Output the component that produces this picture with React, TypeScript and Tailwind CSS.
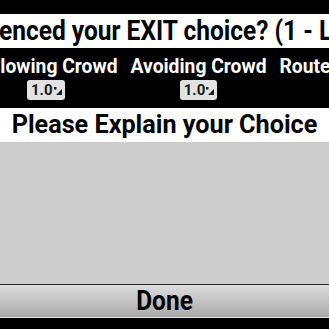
import React from 'react';

const Spinner: React.FC<{ value: string }> = ({ value }) => (
  <div className="flex h-[20px] items-center rounded-[3px] bg-[#e2e2e2] pl-[4px] pr-[3px] text-[15px] font-bold leading-none text-[#1a1a1a]">
    <span>{value}</span>
    <svg width="8" height="8" viewBox="0 0 8 8" className="ml-[1px] mt-[2px]">
      <rect x="0" y="0" width="2.5" height="2.5" fill="#1a1a1a" />
      <polygon points="8,2 8,8 2,8" fill="#1a1a1a" />
    </svg>
  </div>
);

const columns = [
  { label: 'Following Crowd', value: '1.0' },
  { label: 'Avoiding Crowd', value: '1.0' },
  { label: 'Route Familiarity', value: '1.0' },
];

export default function App() {
  return (
    <div
      className="flex h-[329px] w-[329px] flex-col overflow-hidden bg-black"
      style={{ fontFamily: 'Roboto, "Liberation Sans", sans-serif' }}
    >
      <div className="h-[14px] shrink-0" />
      <div className="flex h-[34px] shrink-0 items-center overflow-hidden bg-white">
        <span className="-ml-[1px] inline-block origin-center scale-y-110 whitespace-nowrap text-[24.5px] font-bold leading-none text-black">
          enced your EXIT choice? (1 - L
        </span>
      </div>
      <div className="h-[60px] shrink-0 overflow-hidden">
        <div className="-ml-[26px] flex gap-[13px] pt-[8px]">
          {columns.map((c) => (
            <div key={c.label} className="flex shrink-0 flex-col items-center">
              <span className="whitespace-nowrap text-[19.3px] font-bold leading-[22px] text-white">
                {c.label}
              </span>
              <div className="mt-[2px]">
                <Spinner value={c.value} />
              </div>
            </div>
          ))}
        </div>
      </div>
      <div className="flex h-[34px] shrink-0 items-center justify-center bg-white">
        <span className="inline-block scale-y-105 whitespace-nowrap text-[25.2px] font-bold leading-none text-black">
          Please Explain your Choice
        </span>
      </div>
      <div className="flex-1 bg-[#cccccc]" />
      <div className="h-[1px] shrink-0 bg-[#2a2a2a]" />
      <button className="flex h-[33px] shrink-0 items-center justify-center border-b border-[#e0e0e0] bg-gradient-to-b from-[#dedede] to-[#a9a9a9] text-black">
        <span className="inline-block scale-y-110 text-[24.5px] font-bold leading-none">Done</span>
      </button>
      <div className="h-[11px] shrink-0" />
    </div>
  );
}
